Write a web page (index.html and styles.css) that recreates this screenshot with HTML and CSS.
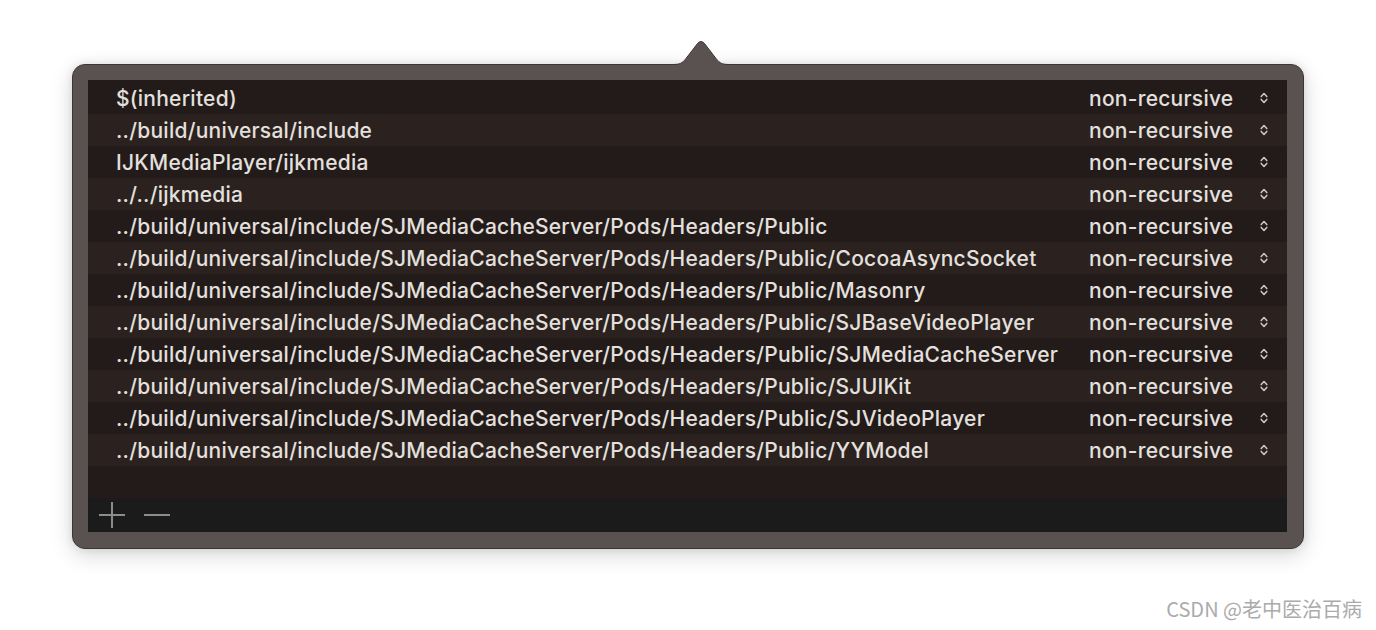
FILE: index.html
```html
<!DOCTYPE html>
<html>
<head>
<meta charset="utf-8">
<link rel="stylesheet" href="styles.css">
</head>
<body>
<div class="stage">
  <div class="popover">
    <svg class="arrow" width="58" height="28" viewBox="0 0 58 28">
      <path class="arrow-fill" d="M0 24.5 C8 24.5 10 23.5 14 18.5 L25.5 3.5 Q29 -0.5 32.5 3.5 L44 18.5 C48 23.5 50 24.5 58 24.5 L58 27 L0 27 Z"/>
      <path class="arrow-line" d="M0 24.5 C8 24.5 10 23.5 14 18.5 L25.5 3.5 Q29 -0.5 32.5 3.5 L44 18.5 C48 23.5 50 24.5 58 24.5"/>
    </svg>
    <div class="panel">
      <div class="list">
        <div class="row"><span class="path">$(inherited)</span><span class="mode">non-recursive</span><svg class="chev" width="8" height="12" viewBox="0 0 8 12"><path d="M1.2 4.6 L4 1.6 L6.8 4.6 M1.2 7.4 L4 10.4 L6.8 7.4"/></svg></div>
        <div class="row"><span class="path">../build/universal/include</span><span class="mode">non-recursive</span><svg class="chev" width="8" height="12" viewBox="0 0 8 12"><path d="M1.2 4.6 L4 1.6 L6.8 4.6 M1.2 7.4 L4 10.4 L6.8 7.4"/></svg></div>
        <div class="row"><span class="path">IJKMediaPlayer/ijkmedia</span><span class="mode">non-recursive</span><svg class="chev" width="8" height="12" viewBox="0 0 8 12"><path d="M1.2 4.6 L4 1.6 L6.8 4.6 M1.2 7.4 L4 10.4 L6.8 7.4"/></svg></div>
        <div class="row"><span class="path">../../ijkmedia</span><span class="mode">non-recursive</span><svg class="chev" width="8" height="12" viewBox="0 0 8 12"><path d="M1.2 4.6 L4 1.6 L6.8 4.6 M1.2 7.4 L4 10.4 L6.8 7.4"/></svg></div>
        <div class="row"><span class="path">../build/universal/include/SJMediaCacheServer/Pods/Headers/Public</span><span class="mode">non-recursive</span><svg class="chev" width="8" height="12" viewBox="0 0 8 12"><path d="M1.2 4.6 L4 1.6 L6.8 4.6 M1.2 7.4 L4 10.4 L6.8 7.4"/></svg></div>
        <div class="row"><span class="path">../build/universal/include/SJMediaCacheServer/Pods/Headers/Public/CocoaAsyncSocket</span><span class="mode">non-recursive</span><svg class="chev" width="8" height="12" viewBox="0 0 8 12"><path d="M1.2 4.6 L4 1.6 L6.8 4.6 M1.2 7.4 L4 10.4 L6.8 7.4"/></svg></div>
        <div class="row"><span class="path">../build/universal/include/SJMediaCacheServer/Pods/Headers/Public/Masonry</span><span class="mode">non-recursive</span><svg class="chev" width="8" height="12" viewBox="0 0 8 12"><path d="M1.2 4.6 L4 1.6 L6.8 4.6 M1.2 7.4 L4 10.4 L6.8 7.4"/></svg></div>
        <div class="row"><span class="path">../build/universal/include/SJMediaCacheServer/Pods/Headers/Public/SJBaseVideoPlayer</span><span class="mode">non-recursive</span><svg class="chev" width="8" height="12" viewBox="0 0 8 12"><path d="M1.2 4.6 L4 1.6 L6.8 4.6 M1.2 7.4 L4 10.4 L6.8 7.4"/></svg></div>
        <div class="row"><span class="path">../build/universal/include/SJMediaCacheServer/Pods/Headers/Public/SJMediaCacheServer</span><span class="mode">non-recursive</span><svg class="chev" width="8" height="12" viewBox="0 0 8 12"><path d="M1.2 4.6 L4 1.6 L6.8 4.6 M1.2 7.4 L4 10.4 L6.8 7.4"/></svg></div>
        <div class="row"><span class="path">../build/universal/include/SJMediaCacheServer/Pods/Headers/Public/SJUIKit</span><span class="mode">non-recursive</span><svg class="chev" width="8" height="12" viewBox="0 0 8 12"><path d="M1.2 4.6 L4 1.6 L6.8 4.6 M1.2 7.4 L4 10.4 L6.8 7.4"/></svg></div>
        <div class="row"><span class="path">../build/universal/include/SJMediaCacheServer/Pods/Headers/Public/SJVideoPlayer</span><span class="mode">non-recursive</span><svg class="chev" width="8" height="12" viewBox="0 0 8 12"><path d="M1.2 4.6 L4 1.6 L6.8 4.6 M1.2 7.4 L4 10.4 L6.8 7.4"/></svg></div>
        <div class="row"><span class="path">../build/universal/include/SJMediaCacheServer/Pods/Headers/Public/YYModel</span><span class="mode">non-recursive</span><svg class="chev" width="8" height="12" viewBox="0 0 8 12"><path d="M1.2 4.6 L4 1.6 L6.8 4.6 M1.2 7.4 L4 10.4 L6.8 7.4"/></svg></div>
      </div>
      <div class="toolbar">
        <svg class="tool" width="28" height="28" viewBox="0 0 28 28"><path d="M1 14 H27 M14 1 V27"/></svg>
        <svg class="tool" width="28" height="28" viewBox="0 0 28 28"><path d="M1 14 H27"/></svg>
      </div>
    </div>
  </div>
  <div class="watermark">CSDN @老中医治百病</div>
</div>
</body>
</html>
```

FILE: styles.css
```css
html, body {
  margin: 0;
  padding: 0;
  background: #ffffff;
}
.stage {
  width: 1376px;
  height: 630px;
  padding-top: 64px;
  box-sizing: border-box;
  font-family: "Inter", "Liberation Sans", sans-serif;
}
.popover {
  position: relative;
  margin-left: 72px;
  width: 1232px;
  height: 485px;
  box-sizing: border-box;
  background: #5a5250;
  border: 1px solid #3c3634;
  border-radius: 13px;
  padding: 15px 16px 16px 15px;
  box-shadow: 0 6px 22px rgba(0, 0, 0, 0.16), 0 0 8px rgba(0, 0, 0, 0.1);
}
.arrow {
  position: absolute;
  left: 599px;
  top: -25px;
  display: block;
}
.arrow-fill {
  fill: #5a5250;
}
.arrow-line {
  fill: none;
  stroke: #3c3634;
  stroke-width: 1;
}
.panel {
  height: 100%;
  display: flex;
  flex-direction: column;
  background: #231b19;
}
.list {
  flex: 1;
  padding-top: 2px;
}
.row {
  height: 32px;
  display: flex;
  align-items: center;
  padding-left: 28px;
  color: #e4e0de;
  font-size: 21px;
  font-weight: 500;
  letter-spacing: 0.25px;
}
.row:nth-child(even) {
  background: #2b2220;
}
.path {
  flex: 1;
  white-space: nowrap;
}
.mode {
  width: 171px;
}
.chev {
  margin-right: 19px;
}
.chev path {
  fill: none;
  stroke: #cfc9c7;
  stroke-width: 1.5;
  stroke-linecap: round;
  stroke-linejoin: round;
}
.toolbar {
  height: 34px;
  background: #1b1b1b;
  display: flex;
  align-items: center;
  gap: 17px;
  padding-left: 10px;
}
.tool path {
  fill: none;
  stroke: #8c8c8c;
  stroke-width: 2;
}
.watermark {
  margin-top: 45px;
  text-align: right;
  padding-right: 14px;
  font-family: "Noto Sans CJK SC", sans-serif;
  font-size: 20px;
  color: #ababab;
}
```
